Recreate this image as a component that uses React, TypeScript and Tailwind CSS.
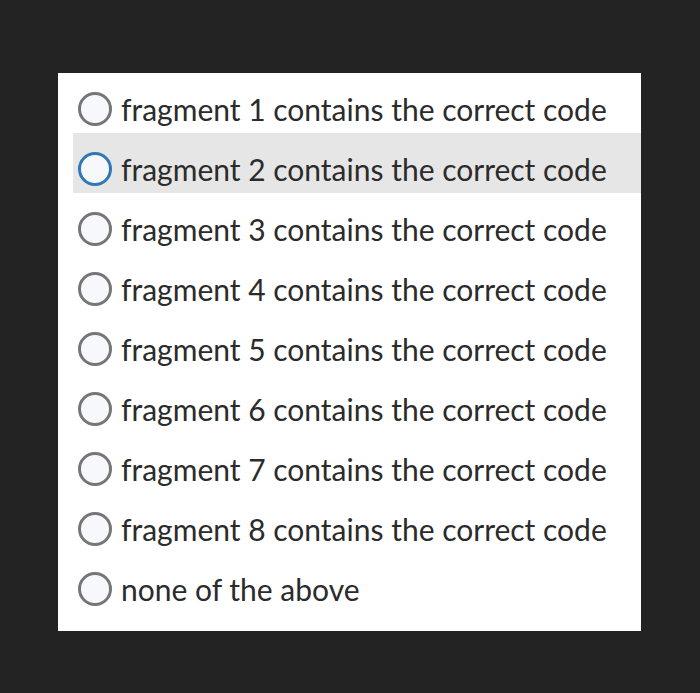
import React from 'react';

const options = [
  'fragment 1 contains the correct code',
  'fragment 2 contains the correct code',
  'fragment 3 contains the correct code',
  'fragment 4 contains the correct code',
  'fragment 5 contains the correct code',
  'fragment 6 contains the correct code',
  'fragment 7 contains the correct code',
  'fragment 8 contains the correct code',
  'none of the above',
];

const App = () => {
  const hovered = 1;

  return (
    <div
      className="w-[700px] h-[693px] bg-[#232323] pt-[73px] pl-[58px]"
      style={{ fontFamily: 'Lato, "Open Sans", sans-serif' }}
    >
      <div className="w-[583px] h-[558px] bg-white pl-[15px]">
        {options.map((label, i) => (
          <div
            key={i}
            className={`h-[60px] pt-[12px] pl-[5px] flex items-center ${i === hovered ? 'bg-[#e6e6e6]' : ''}`}
          >
            <div
              className={`w-[34px] h-[34px] rounded-full border-[3px] bg-[#f6f8fb] shrink-0 ${
                i === hovered ? 'border-[#2e78b8]' : 'border-[#767676]'
              }`}
            />
            <span className="ml-[9px] text-[30px] text-[#2b2b2b] leading-none whitespace-nowrap">{label}</span>
          </div>
        ))}
      </div>
    </div>
  );
};

export default App;
